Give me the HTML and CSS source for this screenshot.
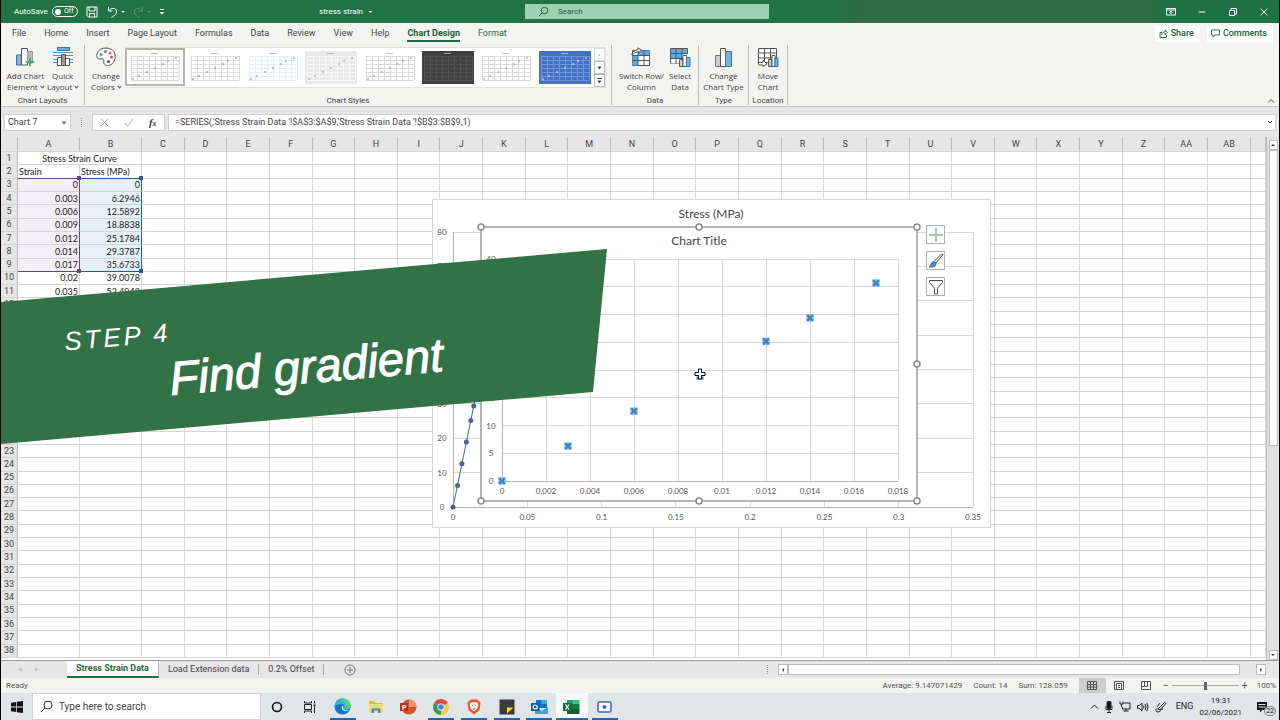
FILE: index.html
```html
<!DOCTYPE html>
<html lang="en">
<head>
<meta charset="utf-8">
<title>stress strain - Excel</title>
<link rel="stylesheet" href="styles.css">
</head>
<body>
<div class="app">
  <header class="titlebar">
    <div class="quick">
      <label class="autosave" for="autosave">AutoSave</label>
      <span class="toggle"><input id="autosave" type="checkbox"><span>Off</span></span>
      <button class="tb save" aria-label="Save"><svg width="12" height="12" viewBox="0 0 12 12"><path d="M1 1h10v10H2.500L1 9.500zM3 1v4h6V1M3.500 11V7.500h5V11"/></svg></button>
      <button class="tb undo" aria-label="Undo"><svg width="18" height="12" viewBox="0 0 18 12"><path d="M1.500 1v4h4M1.500 5C4 1.500 9 1.500 9.500 5S7 9.500 4.500 11.500"/><path class="solid" d="M14 5h4l-2 2z"/></svg></button>
      <button class="tb redo" aria-label="Redo"><svg width="18" height="12" viewBox="0 0 18 12"><path d="M9.500 1v4h-4M9.500 5C7 1.500 2 1.500 1.500 5S4 9.500 6.500 11.500"/><path class="solid" d="M14 5h4l-2 2z"/></svg></button>
      <button class="tb custom" aria-label="Customize toolbar"><svg width="6" height="8" viewBox="0 0 6 8"><path d="M1 1.500h4"/><path class="solid" d="M.5 4h5L3 6.500z"/></svg></button>
    </div>
    <button class="docname">stress strain <svg width="5" height="4" viewBox="0 0 5 4"><path class="solid" d="M.5 1h4l-2 2z"/></svg></button>
    <div class="tsearch">
      <svg width="11" height="11" viewBox="0 0 11 11"><circle cx="6.500" cy="4.500" r="3.200"/><path d="M4.200 6.800L.8 10.200"/></svg>
      <input type="text" aria-label="Search" placeholder="Search">
    </div>
    <div class="winbtns">
      <button aria-label="Ribbon display options"><svg width="10" height="8" viewBox="0 0 10 8"><path d="M.5.5h9v6.500h-9zM.5 2h9M5 6V3.200M3.500 4.500L5 3l1.500 1.500"/></svg></button>
      <button aria-label="Minimize"><svg width="8" height="8" viewBox="0 0 8 8"><path d="M.5 4h7"/></svg></button>
      <button aria-label="Restore"><svg width="8" height="8" viewBox="0 0 8 8"><path d="M.5 2.500h5v5h-5zM2 2.500v-2h5.500V6h-2"/></svg></button>
      <button aria-label="Close"><svg width="8" height="8" viewBox="0 0 8 8"><path d="M.8.8l6.400 6.400M7.200.8L.8 7.200"/></svg></button>
    </div>
  </header>

  <nav class="tabs">
    <button>File</button><button>Home</button><button>Insert</button><button>Page Layout</button><button>Formulas</button><button>Data</button><button>Review</button><button>View</button><button>Help</button><button class="on">Chart Design</button><button class="green">Format</button>
    <span class="push"></span>
    <button class="box"><svg width="9" height="9" viewBox="0 0 9 9"><path d="M3 3.500H1v5h6.500V6M2.500 6C3 3.500 4.500 3 6 3V1l2.500 2.500L6 5.500V4"/></svg>Share</button>
    <button class="box"><svg width="9" height="9" viewBox="0 0 9 9"><path d="M.5 1h8v5H4L2 8V6H.5z"/></svg>Comments</button>
  </nav>

  <section class="ribbon">
    <div class="group g-layouts">
      <div class="tools">
        <button class="tool"><svg width="20" height="20" viewBox="0 0 20 20"><path fill="#7db4dc" stroke="#3775a8" d="M1.500 8h5v10h-5z"/><path fill="#fff" stroke="#555" d="M6.500 1.500h6V18h-6z"/><path fill="#bbb" stroke="#999" d="M12.500 4.500h5V16h-5z"/><path stroke="#3aa562" stroke-width="1.500" d="M15 10.500v9M10.500 15h9"/></svg><span>Add Chart<br>Element<i></i></span></button>
        <button class="tool"><svg width="20" height="20" viewBox="0 0 20 20"><path fill="#6aaee0" stroke="#3775a8" d="M4.500.5h12v3h-12z"/><path stroke="#4b94c9" d="M0 5.500h20M0 8.500h20M0 12.500h20M0 15.500h20"/><path fill="#fff" stroke="#555" d="M4.500 10.500h4v8h-4zM12.500 11.500h4v7h-4z"/><path fill="#999" stroke="#555" d="M8.500 7.500h4v11h-4z"/></svg><span>Quick<br>Layout<i></i></span></button>
      </div>
      <h2>Chart Layouts</h2>
    </div>
    <div class="group g-styles">
      <div class="tools">
        <button class="tool"><svg width="20" height="20" viewBox="0 0 20 20"><path fill="#fff" stroke="#555" d="M10 1C4 1 .8 4.500.8 8.500c0 2.500 1.500 4 3.500 3.500 2.500-.8 4-.3 3.500 2-.5 3 1.500 5 4.500 4.500 4-.5 6.900-4 6.900-9C19.200 4.500 15.500 1 10 1z"/><circle cx="5" cy="7.500" r="1.500" fill="#4b94c9"/><circle cx="9.500" cy="4.500" r="1.500" fill="#d65532"/><circle cx="14" cy="6" r="1.500" fill="#4b94c9"/><circle cx="15.500" cy="10" r="1.500" fill="#d65532"/><circle cx="12.500" cy="14.500" r="1.500" fill="#773a9b"/></svg><span>Change<br>Colors<i></i></span></button>
        <div class="gallery" id="gallery">
          <div class="gscroll"><button aria-label="Previous row" disabled>&#9652;</button><button aria-label="Next row"><svg width="5" height="4" viewBox="0 0 5 4"><path d="M.5.500h4l-2 3z"/></svg></button><button aria-label="More"><svg width="5" height="6" viewBox="0 0 5 6"><path d="M0 0h5v1H0zM.5 2.500h4l-2 3z"/></svg></button></div>
        </div>
      </div>
      <h2>Chart Styles</h2>
    </div>
    <div class="group g-data">
      <div class="tools">
        <button class="tool"><svg width="20" height="20" viewBox="0 0 20 20"><path fill="#fff" stroke="#555" d="M1.500 3.500h17v15h-17z"/><path fill="#5aabe3" d="M7 3.500h11.500v5H7zM1.500 8.500H7v10H1.500z"/><path stroke="#555" d="M1.500 8.500h17M1.500 13.500h17M7 3.500v15M13 3.500v15"/><path fill="#eee" stroke="#555" d="M.8 8l1-3.500 5-2V.8L10.500 3 7.500 6V4.500L3.500 6z"/></svg><span>Switch Row/<br>Column</span></button>
        <button class="tool"><svg width="22" height="20" viewBox="0 0 22 20"><path fill="#5aabe3" stroke="#555" d="M1.500 1.500h17v15h-17z"/><path fill="#fff" d="M2 12h17v4.500H2zM13 7h6v5h-6z"/><path stroke="#555" d="M1.500 6.500h17M1.500 11.500h17M7 1.500v15M13 1.500v15"/><path fill="#ccc" stroke="#555" d="M10.500 12.500h3.500v7h-3.500z"/><path fill="#fff" stroke="#555" d="M14 8.500h3.500v11H14z"/><path fill="#79b4dd" stroke="#3775a8" d="M17.500 10.500H21v9h-3.500z"/></svg><span>Select<br>Data</span></button>
      </div>
      <h2>Data</h2>
    </div>
    <div class="group g-type">
      <div class="tools">
        <button class="tool"><svg width="20" height="20" viewBox="0 0 20 20"><path fill="#ccc" stroke="#777" d="M2.500 8.500h5v11h-5z"/><path fill="#fff" stroke="#555" d="M7.500 1.500h5v18h-5z"/><path fill="#79b4dd" stroke="#3775a8" d="M12.500 4.500h6v15h-6z"/></svg><span>Change<br>Chart Type</span></button>
      </div>
      <h2>Type</h2>
    </div>
    <div class="group g-loc">
      <div class="tools">
        <button class="tool"><svg width="22" height="20" viewBox="0 0 22 20"><path fill="#fff" stroke="#555" d="M1.500 1.500h18v14h-18zM1.500 6h18M1.500 11h18M7.500 1.500v14M13.500 1.500v14"/><path fill="#fff" stroke="#555" d="M1 15.500h5V13l4 4-4 2.500V18H2z"/><path fill="#ccc" stroke="#555" d="M11.500 12.500H15v7h-3.500z"/><path fill="#fff" stroke="#555" d="M15 8.500h3v11h-3z"/><path fill="#79b4dd" stroke="#3775a8" d="M18 11.500h3v8h-3z"/></svg><span>Move<br>Chart</span></button>
      </div>
      <h2>Location</h2>
    </div>
    <button class="collapse" aria-label="Collapse ribbon"><svg width="8" height="6" viewBox="0 0 8 6"><path d="M1 4.500l3-3 3 3"/></svg></button>
  </section>

  <section class="fbar">
    <div class="namebox"><input type="text" aria-label="Name box" value="Chart 7"><svg width="6" height="4" viewBox="0 0 6 4"><path d="M.5.500h5L3 3.500z"/></svg></div>
    <span class="grip"></span>
    <div class="fbtns">
      <button aria-label="Cancel"><svg width="9" height="9" viewBox="0 0 9 9"><path d="M1 1l7 7M8 1L1 8"/></svg></button>
      <button aria-label="Enter"><svg width="10" height="9" viewBox="0 0 10 9"><path d="M1 5l2.500 3L9 1"/></svg></button>
      <button class="fx" aria-label="Insert function"><em>f</em>x</button>
    </div>
    <div class="formula"><input type="text" aria-label="Formula" value="=SERIES(,'Stress Strain Data '!$A$3:$A$9,'Stress Strain Data '!$B$3:$B$9,1)"><svg width="6" height="5" viewBox="0 0 6 5"><path class="chev" d="M1 1l2 2 2-2"/></svg></div>
  </section>

  <main class="sheet">
    <table class="cells" id="cells"></table>
    <div class="vscroll"><i class="up"></i><i class="thumb"></i><span></span><i class="down"></i></div>

    <svg class="charts" id="charts" viewBox="431 198 562 332" width="562" height="332" role="img" aria-label="Stress strain charts"></svg>
    <div class="chartbtns">
      <button aria-label="Chart elements"><svg width="16" height="16" viewBox="0 0 16 16"><path stroke="#8fb8a2" stroke-width="1.500" d="M8 1v14M1 8h14"/></svg></button>
      <button aria-label="Chart styles"><svg width="16" height="16" viewBox="0 0 16 16"><path fill="#fff" stroke="#555" d="M15 1.500L8 10 6 8.500 13.500 1z"/><path fill="#4b94c9" stroke="#33678c" d="M6 8.500L8 10.500c0 3-3 4-7 3.500 2.500-1 1.500-5 5-5.500z"/></svg></button>
      <button aria-label="Chart filters"><svg width="16" height="16" viewBox="0 0 16 16"><path fill="#fff" stroke="#555" d="M1.500 1.500h13V3.500L9.500 9v6h-3V9l-5-5.500z"/></svg></button>
    </div>
    <div class="banner"><p class="step">STEP 4</p><p class="task">Find gradient</p></div>
    <svg class="pointer" width="12" height="12" viewBox="0 0 12 12"><path d="M4.500 1h3v3.500H11v3H7.500V11h-3V7.500H1v-3h3.500z"/></svg>
  </main>

  <footer class="sheettabs">
    <span class="arrows"><button aria-label="Previous sheet">&#9666;</button><button aria-label="Next sheet">&#9656;</button></span>
    <button class="stab active">Stress Strain Data</button>
    <button class="stab">Load Extension data</button>
    <button class="stab">0.2% Offset</button>
    <button class="addsheet" aria-label="New sheet"><svg width="12" height="12" viewBox="0 0 12 12"><circle cx="6" cy="6" r="5"/><path d="M6 3v6M3 6h6"/></svg></button>
    <span class="push"></span>
    <span class="grip"></span>
    <div class="hscroll"><i class="left"></i><i class="thumb"></i><span></span><i class="right"></i></div>
  </footer>

  <div class="status">
    <span>Ready</span><span class="push"></span>
    <span class="stat">Average: 9.147071429</span><span class="stat">Count: 14</span><span class="stat">Sum: 128.059</span>
    <div class="views">
      <button class="on" aria-label="Normal view"><svg width="10" height="9" viewBox="0 0 10 9"><path d="M.5.5h9v8h-9zM.5 3.500h9M.5 6h9M3.500.5v8M6.500.5v8"/></svg></button>
      <button aria-label="Page layout view"><svg width="10" height="9" viewBox="0 0 10 9"><path d="M.5.5h9v8h-9zM2.500 2.500h5v6h-5zM4 4.500h2M4 6.500h2"/></svg></button>
      <button aria-label="Page break view"><svg width="10" height="9" viewBox="0 0 10 9"><path d="M.5.5h9v8h-9zM3.500.5v5h3v-5M.5 5.500h3"/></svg></button>
    </div>
    <button class="zm" aria-label="Zoom out">&#8722;</button><input type="range" aria-label="Zoom" min="0" max="100" value="50"><button class="zm" aria-label="Zoom in">+</button>
    <span class="pct">100%</span>
  </div>

  <div class="taskbar">
    <button class="start" aria-label="Start"><svg width="12" height="12" viewBox="0 0 12 12"><path d="M0 1.700l5.300-.8v4.700H0zM6 .8L12 0v5.600H6zM0 6.400h5.300v4.700L0 10.300zM6 6.400h6V12l-6-.8z"/></svg></button>
    <div class="wsearch"><svg width="13" height="13" viewBox="0 0 13 13"><circle cx="8" cy="5" r="4"/><path d="M5 8L1 12"/></svg><input type="text" aria-label="Search Windows" placeholder="Type here to search"></div>
    <div class="apps">
      <button aria-label="Cortana"><svg width="12" height="12" viewBox="0 0 12 12"><circle cx="6" cy="6" r="4.500" fill="none" stroke="#111" stroke-width="1.600"/></svg></button>
      <button aria-label="Task view"><svg width="12" height="12" viewBox="0 0 12 12"><path fill="none" stroke="#222" d="M.5 3.500h7v5h-7zM.5 0v2h7V0M.5 12v-2h7v2M10.500 0v2.500M10.500 6v6"/><path fill="#222" d="M9.500 3.500h2v2h-2z"/></svg></button>
      <button class="run" aria-label="Edge"><svg width="17" height="17" viewBox="0 0 17 17"><circle cx="8.500" cy="8.500" r="8" fill="#1673c4"/><path fill="#35b8d8" d="M.7 7C2 2 6 .5 8.500.5c5 0 8 3.500 8 7 0 2.500-2 4-4.500 4-2 0-3-1-2-2 .8-1.500 0-3.500-2.500-3.500C4 6 1.500 7 .7 9z"/><path fill="#57ce7b" d="M10 .7c4 .5 6.500 3.500 6.500 6.800 0 2.500-2 4-4.500 4 1.500-4-.5-8-5-9z"/><path fill="#e3e8ea" d="M9.500 9.500c-.8 1.500 1 3.300 6 2.500-1.500 1-4 1.500-6 .5-2-1-2.500-3.500-.5-5z"/></svg></button>
      <button aria-label="File Explorer"><svg width="16" height="14" viewBox="0 0 16 14"><path fill="#e8b83c" d="M1 1h5l1.500 2H15v10H1z"/><path fill="#fbdc72" d="M1 4h14v9H1z"/><path fill="#3f8bc8" d="M3.500 13V8.500h9V13H10v-2.500H6V13z"/></svg></button>
      <button aria-label="PowerPoint"><svg width="17" height="16" viewBox="0 0 17 16"><circle cx="9" cy="8" r="7.500" fill="#d35230"/><path fill="#ff8f6b" d="M9 .5A7.500 7.500 0 0 1 16.500 8H9z"/><path fill="#b8361b" d="M0 4h8v8H0z"/><text x="2" y="10.500" fill="#fff" font-size="7" font-weight="700">P</text></svg></button>
      <button class="run" aria-label="Chrome"><svg width="16" height="16" viewBox="0 0 16 16"><path fill="#dd4b3e" d="M8 8L1.200 4A7.800 7.800 0 0 1 14.800 4z"/><path fill="#f8cb3f" d="M8 8l6.800-4A7.800 7.800 0 0 1 8 15.800z"/><path fill="#2f9e56" d="M8 8v7.800A7.800 7.800 0 0 1 1.200 4z"/><circle cx="8" cy="8" r="3.600" fill="#fff"/><circle cx="8" cy="8" r="2.800" fill="#4285f4"/></svg></button>
      <button class="run" aria-label="Brave"><svg width="14" height="16" viewBox="0 0 14 16"><path fill="#e8502b" d="M4 .5h6L13.500 3.500 12.500 11 7 15.500 1.500 11 .5 3.500z"/><path fill="#fff" d="M3.500 3.500L7 3l3.500.5 1 2.500-1.500 4L7 12.500 4 10 2.500 6z"/><path fill="#e8502b" d="M4 5.500l2 .8v1zM10 5.500l-2 .8v1zM5.500 9h3L7 11z"/></svg></button>
      <button class="run" aria-label="Sticky Notes"><svg width="16" height="16" viewBox="0 0 16 16"><path fill="#3b3b3b" d="M.5.5h15v15H.5z"/><path fill="#f8d91c" d="M8 8.500h6.500L8 14.500z"/></svg></button>
      <button class="run" aria-label="Outlook"><svg width="17" height="16" viewBox="0 0 17 16"><path fill="#1274c4" d="M5 1h11v8H5z"/><path fill="#35a8e8" d="M10.500 1H16v4h-5.500zM4 8l6.500 4L17 8v7H4z"/><path fill="#0f5fa8" d="M0 4h8.500v8H0z"/><circle cx="4.200" cy="8" r="2" fill="none" stroke="#fff" stroke-width="1.200"/></svg></button>
      <button class="run cur" aria-label="Excel"><svg width="17" height="16" viewBox="0 0 17 16"><path fill="#21a366" d="M4 1h6.500v7H4z"/><path fill="#33c481" d="M10.500 1h6v4h-6z"/><path fill="#107c41" d="M4 5h12.500v5H4z"/><path fill="#185c37" d="M4 10h12.500v5H4z"/><path fill="#0f6d39" d="M0 4h8.500v8H0z"/><path stroke="#fff" stroke-width="1.300" d="M2.500 5.500l3.500 5M6 5.500l-3.500 5"/></svg></button>
      <button class="run" aria-label="Snip"><svg width="15" height="12" viewBox="0 0 15 12"><rect x="1" y="1" width="13" height="10" rx="1.500" fill="#fff" stroke="#3567b5" stroke-width="1.500"/><circle cx="7.500" cy="6" r="2" fill="#4b5fc0"/></svg></button>
    </div>
    <span class="push"></span>
    <div class="tray">
      <button aria-label="Hidden icons"><svg width="9" height="7" viewBox="0 0 9 7"><path d="M1 5.500L4.500 2 8 5.500"/></svg></button>
      <button aria-label="Microphone"><svg width="8" height="12" viewBox="0 0 8 12"><rect x="2" y=".5" width="4" height="7" rx="1" fill="#111"/><path d="M1 5v3.500h6V5M4 8.500V11M2 11.500h4"/></svg></button>
      <button aria-label="Network"><svg width="12" height="11" viewBox="0 0 12 11"><path d="M4.500 2h6.500v6H3.500V6M7 8v2M4.500 10h5M1 .5v2.500h3V.5M2.500 3v3"/></svg></button>
      <button aria-label="Volume"><svg width="12" height="10" viewBox="0 0 12 10"><path d="M.5 3.500h2L5 1v8L2.500 6.500h-2zM6.500 3.500q1 1.500 0 3M8 2q2 3 0 6M9.800.8q2.500 4.200 0 8.400"/></svg></button>
      <button aria-label="Pen"><svg width="12" height="12" viewBox="0 0 12 12"><path d="M3 8L9.500 1.500l1.500 1L5 9zM3 8c-3-1-3 3 0 3s2-3 5-3M5 2L2 6"/></svg></button>
      <button class="lang">ENG</button>
      <button class="clock">19:31<br>02/06/2021</button>
      <button class="notif" aria-label="22 notifications"><svg width="12" height="12" viewBox="0 0 12 12"><path fill="#111" stroke="none" d="M1 1h10v8H6l-2 2.500V9H1z"/><path stroke="#e3e8ea" d="M2.500 3.500h7M2.500 6h7"/></svg><b>22</b></button>
    </div>
  </div>
</div>
<script src="app.js"></script>
</body>
</html>
```
FILE: styles.css
```css
* { box-sizing: border-box; }
body {
  margin: 0; padding: 0 1px; height: 100vh; overflow: hidden; background: #000;
  font-family: Roboto, "Open Sans", sans-serif; font-size: 9px; line-height: 11px; color: #444;
}
button { border: 0; padding: 0; margin: 0; background: none; font: inherit; color: inherit; white-space: nowrap; }
input { font: inherit; color: inherit; border: 0; background: none; padding: 0; margin: 0; min-width: 0; outline: 0; }
svg { display: block; flex: none; fill: none; stroke: none; }
h2, p { margin: 0; font-weight: 400; }
i { font-style: normal; }
.push { flex: 1; }
.app { height: 100%; display: flex; flex-direction: column; background: #e6e6e6; }

.titlebar {
  height: 23px; flex: none; display: grid; align-items: center; color: #fff; font-size: 8px;
  grid-template-columns: 524fr 244px 510fr;
  background: linear-gradient(90deg, #217346 65%, #2f6b43 67%, #2f6b43 90%, #1e7145 91%);
}
.titlebar svg { stroke: #fff; }
.titlebar .solid { fill: #fff; stroke: none; }
.quick { display: flex; align-items: center; grid-column: 1; grid-row: 1; padding-left: 13px; }
.autosave { width: 34px; }
.toggle { display: flex; align-items: center; gap: 3px; width: 26px; height: 11px; margin-left: 4px; padding-left: 2px; border: 1px solid #fff; border-radius: 6px; }
.toggle input { appearance: none; width: 6px; height: 6px; border-radius: 3px; background: #fff; }
.toggle span { font-size: 7px; line-height: 9px; }
.save { margin-left: 8px; }
.undo { margin-left: 9px; }
.redo { margin-left: 8px; opacity: .25; }
.custom { margin-left: 8px; }
.docname { grid-column: 1; grid-row: 1; justify-self: end; margin-right: 152px; display: flex; align-items: center; gap: 5px; }
.tsearch { grid-column: 2; grid-row: 1; display: flex; align-items: center; gap: 9px; height: 15px; padding-left: 13px; background: #9fd0b4; color: #22593c; }
.titlebar .tsearch svg { stroke: #22593c; }
.tsearch input::placeholder { color: #22593c; opacity: 1; }
.winbtns { grid-column: 3; grid-row: 1; justify-self: end; display: flex; }
.winbtns button { width: 31px; display: flex; justify-content: center; }

.tabs { display: flex; align-items: center; gap: 18px; height: 21px; flex: none; padding: 0 6px 0 11px; background: #f3f3f1; }
.tabs button { height: 17px; }
.tabs .on { color: #1d5c3b; font-weight: 700; border-bottom: 2px solid #1d6b40; padding-top: 2px; }
.tabs .green { color: #1d6b40; }
.tabs .box { display: flex; align-items: center; gap: 3px; height: 16px; padding: 0 6px 0 4px; background: #fff; color: #1d5c3b; font-weight: 500; }
.tabs .box + .box { margin-left: -11px; }
.box svg { stroke: #3a6e53; }

.ribbon { position: relative; display: flex; height: 63px; flex: none; background: #f3f3f1; border-bottom: 1px solid #c6c6c6; }
.group { display: flex; flex-direction: column; margin: 1px 0 1px; border-right: 1px solid #bdbdbd; }
.group h2 { margin-top: auto; text-align: center; font-size: 8px; line-height: 8px; }
.tools { display: flex; justify-content: center; gap: 2px; padding-top: 2px; }
.tool { display: flex; flex-direction: column; align-items: center; gap: 3px; font-family: "Open Sans", sans-serif; font-size: 8px; }
.tool i { display: inline-block; width: 3px; height: 3px; margin: 0 0 2px 3px; border: solid #555; border-width: 0 1px 1px 0; transform: rotate(45deg); }
.g-layouts { width: 84px; }
.g-layouts .tools { gap: 3px; }
.g-styles { width: 527px; }
.g-styles .tools { justify-content: flex-start; padding-left: 2px; gap: 0; }
.g-styles .tool { width: 38px; }
.g-data { width: 87px; }
.g-data .tools { gap: 5px; }
.g-type { width: 50px; }
.g-loc { width: 39px; }
.gallery { flex: 1; display: flex; height: 41px; margin: 0 5px 0 0; background: #fff; border: 1px solid #e0e0e0; border-left: 0; }
.thumbbtn { flex: 1; display: flex; align-items: center; justify-content: center; border: 1px solid transparent; }
.thumbbtn.sel { border: 2px solid #b5b5ad; height: 38px; }
.gscroll { width: 11px; display: flex; flex-direction: column; order: 9; }
.gscroll button { flex: 1; display: flex; align-items: center; justify-content: center; border: 1px solid #bbb; font-size: 5px; }
.gscroll button svg { fill: #444; }
.gscroll button:disabled { color: #bbb; border-color: #ddd; }
.collapse { margin: auto 4px 2px auto; }
.collapse svg { stroke: #444; }

.fbar { display: flex; align-items: stretch; height: 17px; margin: 7px 3px 6px; flex: none; }
.fbar > div { background: #fff; border: 1px solid #d0d0d0; display: flex; align-items: center; }
.namebox { width: 67px; padding: 0 3px; }
.namebox input { flex: 1; }
.namebox svg, .formula svg { fill: #666; }
.formula .chev { fill: none; stroke: #444; }
.grip { width: 1px; border-left: 1px dotted #999; margin: 4px 10px; align-self: stretch; }
.fbtns { width: 73px; justify-content: space-around; }
.fbtns svg { stroke: #aaa; }
.fx { font-family: "Liberation Serif", serif; font-style: italic; font-weight: 700; font-size: 8px; }
.fx em { font-size: 11px; }
.formula { flex: 1; margin-left: 3px; padding: 0 2px 0 6px; }
.formula input { flex: 1; }

.sheet { position: relative; flex: 1; min-height: 0; display: flex; background: #fff; border-bottom: 1px solid #9c9c9c; }
.cells { flex: 1; table-layout: fixed; border-collapse: separate; border-spacing: 0; width: 0; height: calc(100% - 2px); font-family: Lato, "Open Sans", sans-serif; color: #222; }
.cells tr:first-child { height: 15px; }
.c-num { width: 17px; } .c-data { width: 62px; } .c-last { width: 15px; }
.cells th, .cells td { padding: 0 1px; font-size: 9px; line-height: 11px; font-weight: 400; border-right: 1px solid #d9d9d9; border-bottom: 1px solid #d4d4d4; text-align: right; white-space: nowrap; overflow: visible; }
.cells th { background: #e6e6e6; text-align: center; color: #444; font-family: Roboto, sans-serif; border-right-color: #bbb; }
.cells td.l { text-align: left; }
.cells td.m { text-align: center; }
.cells td { position: relative; }
.cells .xr { background: #f3eef8; border-right-color: #6b3f97; }
.cells .yr { background: #e6f0f9; border-right-color: #1f5c99; }
.cells .tx { border-bottom-color: #6b3f97; }
.cells .ty { border-bottom-color: #1f5c99; }
.h::after { content: ""; position: absolute; right: -2px; bottom: -2px; width: 4px; height: 4px; background: #6b3f97; z-index: 1; }
.ty.h::after { background: #1f5c99; }
.vscroll { width: 13px; display: flex; flex-direction: column; align-items: center; padding: 3px 0 0; background: #e0e0e0; border-left: 1px solid #bbb; }
.vscroll span { flex: 208; }
.vscroll i, .hscroll i { display: flex; align-items: center; justify-content: center; background: #fff; border: 1px solid #bbb; }
.vscroll i { width: 9px; height: 10px; }
.vscroll .thumb { flex: 300; }
.up::before, .down::before, .left::before, .right::before { content: ""; border: 2px solid transparent; }
.up::before { border-bottom-color: #444; margin-bottom: 2px; }
.down::before { border-top-color: #444; margin-top: 2px; }
.left::before { border-right-color: #444; margin-right: 2px; }
.right::before { border-left-color: #444; margin-left: 2px; }

.charts { position: absolute; left: 430px; top: 61px; font-family: Lato, "Open Sans", sans-serif; font-size: 8px; }
.charts text { fill: #555; text-anchor: middle; }
.charts .title { font-size: 12px; fill: #444; }
.frame { fill: #fff; stroke: #d6d6d6; }
.pane { fill: #fff; stroke: #b4b4b4; stroke-width: 2; }
.grid { stroke: #d9d9d9; shape-rendering: crispEdges; }
.axis { stroke: #b5b5b5; shape-rendering: crispEdges; }
.handle { fill: #fff; stroke: #8c8c8c; stroke-width: 1.5; }
.series { stroke: #41659c; stroke-width: 1; }
.dot { fill: #41659c; }
.mark { fill: #3c86c4; }
.cross { stroke: #d5ecf8; }
.chartbtns { position: absolute; left: 925px; top: 88px; display: flex; flex-direction: column; gap: 7px; }
.chartbtns button { width: 19px; height: 19px; display: flex; align-items: center; justify-content: center; background: #fff; border: 1px solid #b0b0b0; }
.banner { position: absolute; left: 0; top: 112px; width: 607px; height: 196px; color: #fff; background: #337246; clip-path: polygon(0 53px, 606px 0, 592px 143px, 0 195px); font-family: "Liberation Sans", Arial, sans-serif; white-space: nowrap; }
.step, .task { position: absolute; transform: rotate(-5deg); font-style: italic; -webkit-text-stroke: 1px #fff; }
.step { left: 63px; top: 72px; font-size: 26px; line-height: 32px; letter-spacing: 3px; -webkit-text-stroke-width: 0; }
.task { left: 168px; top: 90px; font-size: 47px; line-height: 56px; }
.pointer { position: absolute; left: 693px; top: 231px; fill: #fff; stroke: #000; stroke-width: 1; }

.sheettabs { display: flex; align-items: stretch; height: 17px; flex: none; }
.arrows { width: 66px; display: flex; gap: 13px; align-items: center; padding-left: 17px; font-size: 7px; color: #b5b5b5; }
.stab { margin: 3px 0; padding: 0 9px; border-right: 1px solid #aaa; }
.stab.active { margin: 0; padding: 0 9px; background: #fff; color: #1d6b40; font-weight: 700; border-right: 1px solid #bbb; border-bottom: 2px solid #1d6b40; }
.addsheet { margin-left: 20px; align-self: center; }
.addsheet svg { stroke: #777; }
.hscroll { width: 488px; display: flex; align-items: center; margin-right: 13px; }
.hscroll i { width: 10px; height: 11px; }
.hscroll .thumb { flex: 463; }
.hscroll span { flex: 16; }

.status { display: flex; align-items: center; height: 15px; flex: none; background: #f3f3f1; padding: 0 3px 0 5px; font-size: 8px; color: #555; }
.stat { margin-right: 11px; }
.views { display: flex; height: 100%; }
.views button { width: 27px; display: flex; align-items: center; justify-content: center; }
.views .on { background: #cdcdcd; }
.views svg { stroke: #555; }
.zm { width: 12px; font-size: 10px; }
.status input { width: 67px; height: 9px; appearance: none; background: linear-gradient(#aaa, #aaa) center / 100% 1px no-repeat; }
.status input::-webkit-slider-thumb { appearance: none; width: 3px; height: 8px; background: #666; }
.pct { margin-left: 6px; }

.taskbar { display: flex; align-items: stretch; height: 27px; flex: none; background: #e0e6e8; color: #222; }
.start { width: 31px; display: flex; align-items: center; justify-content: center; }
.start svg { fill: #111; }
.wsearch { width: 229px; display: flex; align-items: center; gap: 6px; padding-left: 7px; background: #fff; border: 1px solid #d0d4d6; }
.wsearch svg { stroke: #333; }
.wsearch input { flex: 1; font-size: 10px; }
.wsearch input::placeholder { color: #444; opacity: 1; }
.apps { display: flex; width: 360px; }
.apps button { flex: 1; display: flex; align-items: center; justify-content: center; border-bottom: 2px solid transparent; border-top: 2px solid transparent; }
.apps .run { background: linear-gradient(#2165ae, #2165ae) bottom / 26px 2px no-repeat border-box; }
.apps .cur { background: linear-gradient(#2165ae, #2165ae) bottom / 100% 2px no-repeat border-box, #f6f9f9; }
.tray { display: flex; align-items: center; gap: 6px; padding-right: 5px; }
.tray svg { stroke: #222; }
.lang { margin-left: 3px; }
.clock { font-size: 8px; line-height: 12px; text-align: center; }
.notif { position: relative; margin-left: 8px; padding-right: 6px; }
.notif b { position: absolute; right: -2px; top: 5px; padding: 0 1px; border: 1px solid #888; border-radius: 6px; background: #d5dadc; font-size: 7px; font-weight: 400; line-height: 8px; }
```
FILE: app.js
```js
const esc = (n) => Math.round(n * 10) / 10;

// Worksheet
const data = {
  3: ['0', '0'], 4: ['0.003', '6.2946'], 5: ['0.006', '12.5892'], 6: ['0.009', '18.8838'],
  7: ['0.012', '25.1784'], 8: ['0.014', '29.3787'], 9: ['0.017', '35.6733'],
  10: ['0.02', '39.0078'], 11: ['0.035', '52.4943']
};
const names = [];
for (let i = 0; i < 28; i++) names.push(i < 26 ? String.fromCharCode(65 + i) : 'A' + String.fromCharCode(39 + i));
let html = '<colgroup><col class="c-num"><col class="c-data"><col class="c-data">' + '<col>'.repeat(26) + '<col class="c-last"></colgroup>';
html += '<tr><th></th>' + names.map((n) => `<th>${n}</th>`).join('') + '<th></th></tr>';
for (let r = 1; r <= 38; r++) {
  html += `<tr><th>${r}</th>`;
  if (r === 1) html += '<td class="m" colspan="2">Stress Strain Curve</td>';
  else if (r === 2) html += '<td class="l tx h">Strain</td><td class="l ty h">Stress (MPa)</td>';
  else {
    const d = data[r] || ['', ''];
    const inside = r <= 9;
    html += `<td class="${inside ? 'xr' : ''}${r === 9 ? ' tx h' : ''}">${d[0]}</td>`;
    html += `<td class="${inside ? 'yr' : ''}${r === 9 ? ' ty h' : ''}">${d[1]}</td>`;
  }
  html += '<td></td>'.repeat(27) + '</tr>';
}
document.getElementById('cells').innerHTML = html;

// Charts
const line = (c, x1, y1, x2, y2) => `<line class="${c}" x1="${esc(x1)}" y1="${esc(y1)}" x2="${esc(x2)}" y2="${esc(y2)}"/>`;
const label = (x, y, t, c = '') => `<text class="${c}" x="${esc(x)}" y="${esc(y)}">${t}</text>`;
function plot(p) {
  let s = '';
  for (let i = 0; i <= p.ny; i++) {
    const y = p.b - (p.b - p.t) * i / p.ny;
    s += line(i ? 'grid' : 'axis', p.l, y, p.r, y) + label(p.l - p.gap, y + 3, i * p.sy);
  }
  for (let i = 0; i <= p.nx; i++) {
    const x = p.l + (p.r - p.l) * i / p.nx;
    s += line(i ? 'grid' : 'axis', x, p.t, x, p.b) + label(x, p.b + 13, +(i * p.sx).toFixed(3));
  }
  return s;
}
const pts = [3, 4, 5, 6, 7, 8, 9].map((r) => data[r].map(Number));
let s = '<rect class="frame" x="432.5" y="199.5" width="558" height="328"/>';
s += plot({ l: 453, r: 973, t: 232, b: 507, nx: 7, ny: 8, sx: 0.05, sy: 10, gap: 11 });
s += label(711, 218, 'Stress (MPa)', 'title');
const outer = pts.map(([x, y]) => [453 + x / 0.35 * 520, 507 - y / 80 * 275]);
s += `<polyline class="series" points="${outer.map((p) => p.map(esc).join()).join(' ')}"/>`;
s += outer.map(([x, y]) => `<circle class="dot" cx="${esc(x)}" cy="${esc(y)}" r="2.5"/>`).join('');
s += '<rect class="pane" x="481" y="227" width="436" height="274"/>';
s += plot({ l: 502, r: 898, t: 259, b: 481, nx: 9, ny: 8, sx: 0.002, sy: 5, gap: 11 });
s += label(699, 245, 'Chart Title', 'title');
s += pts.map(([x, y]) => {
  const cx = 502 + x / 0.018 * 396, cy = 481 - y / 40 * 222;
  return `<rect class="mark" x="${esc(cx - 3.5)}" y="${esc(cy - 3.5)}" width="7" height="7"/>`
    + line('cross', cx - 3.5, cy, cx - 2, cy) + line('cross', cx + 2, cy, cx + 3.5, cy)
    + line('cross', cx, cy - 3.5, cx, cy - 2) + line('cross', cx, cy + 2, cx, cy + 3.5);
}).join('');
for (const [x, y] of [[481, 227], [699, 227], [917, 227], [481, 364], [917, 364], [481, 501], [699, 501], [917, 501]])
  s += `<circle class="handle" cx="${x}" cy="${y}" r="3"/>`;
document.getElementById('charts').innerHTML = s;

// Style gallery thumbnails
const dots = [[4, 28], [10, 25], [18, 21], [26, 17], [34, 13], [39, 10], [47, 7]];
const looks = [
  ['#fff', '#dadada', '#777'], ['#fff', '#dedede', '#777'], ['#fff', '#e6eef4', '#5f7d99'], ['#e9e9e9', '#f8f8f8', '#888'],
  ['#fff', '#dadada', '#888'], ['#404040', '#535353', '#404040'], ['#fff', '#dadada', '#888'], ['#4472c4', '#6f93d6', '#fff']
];
document.getElementById('gallery').insertAdjacentHTML('afterbegin', looks.map(([bg, grid, dot], k) => {
  let g = '';
  for (let x = 2; x <= 50; x += 6) g += `M${x}.5 5v24`;
  for (let y = 5; y <= 29; y += 4) g += `M2 ${y}.5h48`;
  return `<button class="thumbbtn${k ? '' : ' sel'}" aria-label="Style ${k + 1}"><svg width="52" height="33" viewBox="0 0 52 33">`
    + `<rect width="52" height="33" fill="${bg}"/><path stroke="${grid}" d="${g}"/><path stroke="${k === 5 ? '#fff' : dot}" stroke-width=".5" d="M22 2.500h7"/>`
    + dots.map(([x, y]) => `<circle cx="${x}" cy="${y}" r=".8" fill="${dot}"/>`).join('') + '</svg></button>';
}).join(''));
```
